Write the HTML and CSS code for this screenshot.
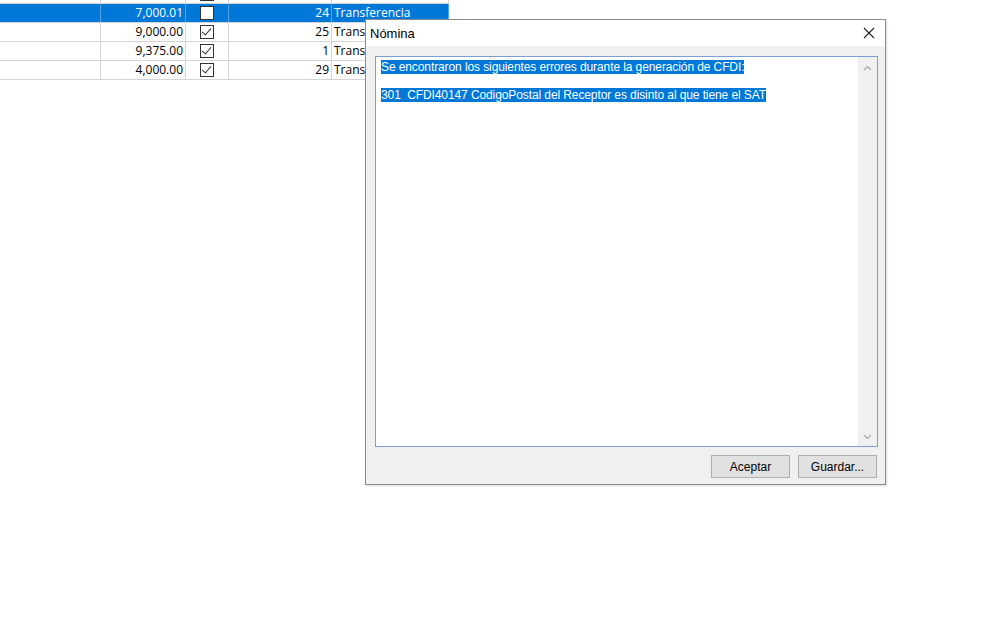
FILE: index.html
```html
<!DOCTYPE html>
<html lang="es">
<head>
  <meta charset="UTF-8" />
  <title>Nómina</title>
  <link rel="stylesheet" href="styles.css">
</head>
<body>

  <div class="grid-wrap">
    <table class="grid">
      <tbody>
        <tr>
          <td class="c-a"></td>
          <td class="c-num">5,000.00</td>
          <td class="c-chk"><span class="chk"></span></td>
          <td class="c-num">3</td>
          <td class="c-txt">Transferencia</td>
        </tr>
        <tr class="selected">
          <td class="c-a"></td>
          <td class="c-num">7,000.01</td>
          <td class="c-chk"><span class="chk"></span></td>
          <td class="c-num">24</td>
          <td class="c-txt">Transferencia</td>
        </tr>
        <tr>
          <td class="c-a"></td>
          <td class="c-num">9,000.00</td>
          <td class="c-chk"><span class="chk checked"></span></td>
          <td class="c-num">25</td>
          <td class="c-txt">Transferencia</td>
        </tr>
        <tr>
          <td class="c-a"></td>
          <td class="c-num">9,375.00</td>
          <td class="c-chk"><span class="chk checked"></span></td>
          <td class="c-num">1</td>
          <td class="c-txt">Transferencia</td>
        </tr>
        <tr>
          <td class="c-a"></td>
          <td class="c-num">4,000.00</td>
          <td class="c-chk"><span class="chk checked"></span></td>
          <td class="c-num">29</td>
          <td class="c-txt">Transferencia</td>
        </tr>
      </tbody>
    </table>
  </div>

  <!-- ventana de errores -->
  <div class="dialog">
    <div class="dialog-title">
      <span>Nómina</span>
      <svg class="close" width="12" height="12" viewBox="0 0 12 12">
        <path d="M1 1 L11 11 M11 1 L1 11" stroke="#222" stroke-width="1.1" fill="none"/>
      </svg>
    </div>
    <div class="dialog-body">
      <div class="memo">
        <div class="memo-text">
          <p><span class="sel">Se encontraron los siguientes errores durante la generación de CFDI:</span></p>
          <p>&nbsp;</p>
          <p><span class="sel">301&nbsp; CFDI40147 CodigoPostal del Receptor es disinto al que tiene el SAT</span></p>
        </div>
        <div class="scrollbar">
          <svg width="9" height="6" viewBox="0 0 9 6"><path d="M1 5 L4.5 1.5 L8 5" stroke="#a6a6a6" stroke-width="1.2" fill="none"/></svg>
          <svg width="9" height="6" viewBox="0 0 9 6"><path d="M1 1 L4.5 4.5 L8 1" stroke="#a6a6a6" stroke-width="1.2" fill="none"/></svg>
        </div>
      </div>
      <div class="dialog-buttons">
        <button class="btn">Aceptar</button>
        <button class="btn">Guardar...</button>
      </div>
    </div>
  </div>

</body>
</html>
```

FILE: styles.css
```css
body {
  margin: 0;
  background: #fff;
  font-family: "Open Sans", sans-serif;
  font-size: 12px;
  color: #000;
}

.grid-wrap {
  margin-top: -15px;
}

.grid {
  border-collapse: collapse;
  table-layout: fixed;
  width: 449px;
}

.grid td {
  height: 18px;
  padding: 0 2px;
  border-right: 1px solid #d4d4d4;
  border-bottom: 1px solid #d4d4d4;
  white-space: nowrap;
  overflow: hidden;
  line-height: 18px;
}

.c-a { width: 96px; }
.c-num { text-align: right; }
.grid td:nth-child(2) { width: 80px; }
.c-chk { width: 38px; text-align: center; }
.grid td:nth-child(4) { width: 98px; }
.c-txt { width: 112px; }

.selected td {
  background: #0078d7;
  color: #fff;
  border-right-color: #5aa0e6;
}

.chk {
  display: inline-block;
  width: 12px;
  height: 12px;
  border: 1px solid #333;
  background: #fff;
  vertical-align: middle;
  position: relative;
  top: -1px;
}

.chk.checked::after {
  content: "";
  position: absolute;
  left: 3px;
  top: 0px;
  width: 4px;
  height: 8px;
  border-right: 1px solid #333;
  border-bottom: 1px solid #333;
  transform: rotate(40deg);
}

.dialog {
  position: absolute;
  left: 365px;
  top: 19px;
  width: 519px;
  height: 464px;
  border: 1px solid #8c8c8c;
  background: #f0f0f0;
  box-shadow: 1px 1px 2px rgba(0,0,0,0.15);
  font-family: "Liberation Sans", sans-serif;
  display: flex;
  flex-direction: column;
}

.dialog-title {
  height: 26px;
  background: #fff;
  display: flex;
  align-items: center;
  justify-content: space-between;
  padding: 0 10px 0 4px;
  font-size: 13px;
}

.dialog-body {
  flex: 1;
  padding: 10px 7px 0 9px;
  display: flex;
  flex-direction: column;
}

.memo {
  height: 389px;
  border: 1px solid #7a9fd6;
  background: #fff;
  display: flex;
}

.memo-text {
  flex: 1;
  padding: 3px 5px;
  font-size: 12px;
  line-height: 14px;
  letter-spacing: -0.1px;
}

.memo-text p {
  margin: 0;
}

.sel {
  background: #0078d7;
  color: #fff;
}

.scrollbar {
  width: 19px;
  background: #f0f0f0;
  display: flex;
  flex-direction: column;
  justify-content: space-between;
  align-items: center;
  padding: 8px 0 6px;
}

.dialog-buttons {
  display: flex;
  justify-content: flex-end;
  gap: 8px;
  margin-top: 8px;
  padding-right: 1px;
}

.btn {
  width: 79px;
  height: 23px;
  background: #e1e1e1;
  border: 1px solid #adadad;
  font-family: "Liberation Sans", sans-serif;
  font-size: 12px;
  color: #000;
  padding: 0;
}
```
